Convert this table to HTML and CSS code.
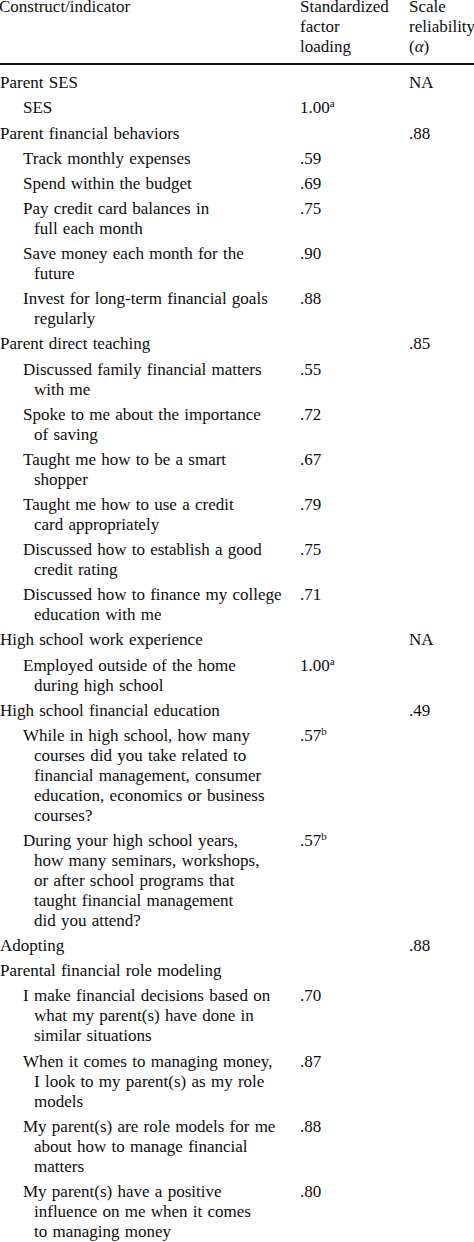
FILE: index.html
```html
<!DOCTYPE html>
<html lang="en">
<head>
<meta charset="utf-8">
<title>Construct indicators</title>
<link rel="stylesheet" href="styles.css">
</head>
<body>
<table class="tbl">
  <colgroup>
    <col class="c1"><col class="c2"><col class="c3">
  </colgroup>
  <thead>
    <tr>
      <th class="h h1">Construct/indicator</th>
      <th class="h">Standardized<br>factor<br>loading</th>
      <th class="h">Scale<br>reliability<br>(<i>α</i>)</th>
    </tr>
  </thead>
  <tbody>
    <tr class="first"><td class="con">Parent SES</td><td></td><td>NA</td></tr>
    <tr><td class="ind">SES</td><td>1.00<sup>a</sup></td><td></td></tr>
    <tr><td class="con">Parent financial behaviors</td><td></td><td>.88</td></tr>
    <tr><td class="ind">Track monthly expenses</td><td>.59</td><td></td></tr>
    <tr><td class="ind">Spend within the budget</td><td>.69</td><td></td></tr>
    <tr><td class="ind">Pay credit card balances in<br>full each month</td><td>.75</td><td></td></tr>
    <tr><td class="ind">Save money each month for the<br>future</td><td>.90</td><td></td></tr>
    <tr><td class="ind">Invest for long-term financial goals<br>regularly</td><td>.88</td><td></td></tr>
    <tr><td class="con">Parent direct teaching</td><td></td><td>.85</td></tr>
    <tr><td class="ind">Discussed family financial matters<br>with me</td><td>.55</td><td></td></tr>
    <tr><td class="ind">Spoke to me about the importance<br>of saving</td><td>.72</td><td></td></tr>
    <tr><td class="ind">Taught me how to be a smart<br>shopper</td><td>.67</td><td></td></tr>
    <tr><td class="ind">Taught me how to use a credit<br>card appropriately</td><td>.79</td><td></td></tr>
    <tr><td class="ind">Discussed how to establish a good<br>credit rating</td><td>.75</td><td></td></tr>
    <tr><td class="ind">Discussed how to finance my college<br>education with me</td><td>.71</td><td></td></tr>
    <tr><td class="con">High school work experience</td><td></td><td>NA</td></tr>
    <tr><td class="ind">Employed outside of the home<br>during high school</td><td>1.00<sup>a</sup></td><td></td></tr>
    <tr><td class="con">High school financial education</td><td></td><td>.49</td></tr>
    <tr><td class="ind">While in high school, how many<br>courses did you take related to<br>financial management, consumer<br>education, economics or business<br>courses?</td><td>.57<sup>b</sup></td><td></td></tr>
    <tr><td class="ind">During your high school years,<br>how many seminars, workshops,<br>or after school programs that<br>taught financial management<br>did you attend?</td><td>.57<sup>b</sup></td><td></td></tr>
    <tr><td class="con">Adopting</td><td></td><td>.88</td></tr>
    <tr><td class="con">Parental financial role modeling</td><td></td><td></td></tr>
    <tr><td class="ind">I make financial decisions based on<br>what my parent(s) have done in<br>similar situations</td><td>.70</td><td></td></tr>
    <tr><td class="ind">When it comes to managing money,<br>I look to my parent(s) as my role<br>models</td><td>.87</td><td></td></tr>
    <tr><td class="ind">My parent(s) are role models for me<br>about how to manage financial<br>matters</td><td>.88</td><td></td></tr>
    <tr><td class="ind">My parent(s) have a positive<br>influence on me when it comes<br>to managing money</td><td>.80</td><td></td></tr>
  </tbody>
</table>
</body>
</html>
```

FILE: styles.css
```css
html, body {
  margin: 0;
  padding: 0;
  background: #ffffff;
}

body {
  font-family: "Liberation Serif", "Times New Roman", serif;
  font-size: 17px;
  line-height: 20px;
  color: #0d0d0d;
  word-spacing: 1px;
  overflow: hidden;
}

.tbl {
  width: 474px;
  table-layout: fixed;
  border-collapse: separate;
  border-spacing: 0;
  margin-top: -3px;
}

.c1 { width: 300px; }
.c2 { width: 109px; }
.c3 { width: 65px; }

.tbl th,
.tbl td {
  padding: 5.15px 0 0 0;
  vertical-align: top;
  text-align: left;
  font-weight: normal;
  white-space: nowrap;
}

.tbl th.h {
  padding: 0 0 6px 0;
  border-bottom: 2px solid #0d0d0d;
}

.tbl th.h1 {
  text-indent: -1px;
}

.tbl tr.first td {
  padding-top: 8.3px;
}

.con {
  padding-left: 0;
}

.tbl td.ind {
  padding-left: 34px;
  text-indent: -11px;
}

sup {
  font-size: 11px;
  line-height: 0;
  vertical-align: 6px;
  word-spacing: 0;
}
```
